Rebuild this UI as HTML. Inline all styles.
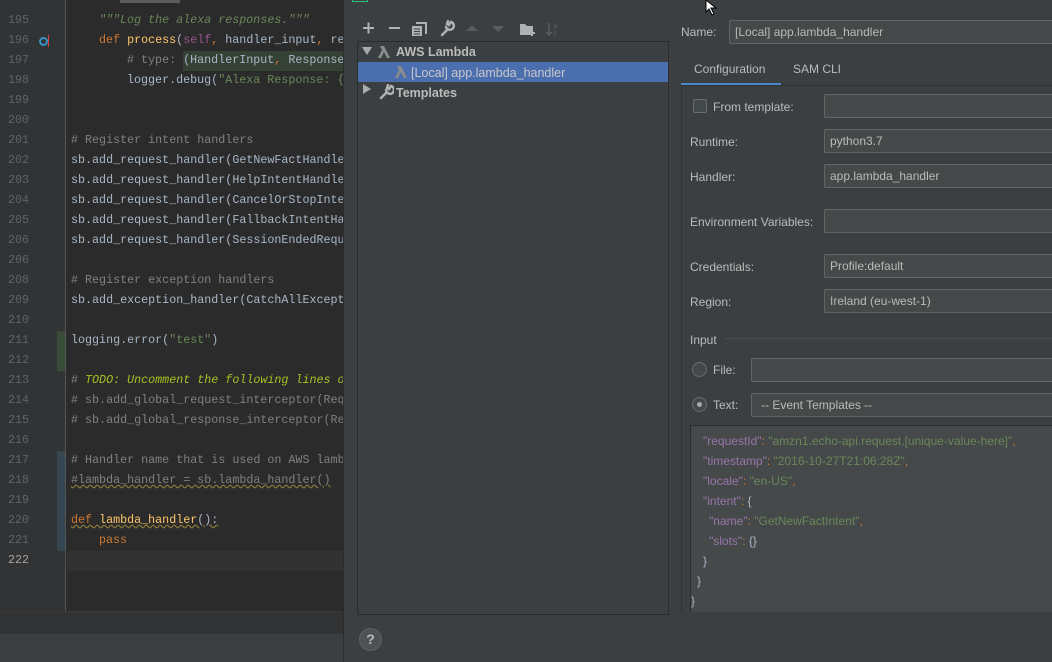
<!DOCTYPE html>
<html><head><meta charset="utf-8"><style>
*{margin:0;padding:0;box-sizing:border-box}
body{width:1052px;height:662px;overflow:hidden;background:#3c3f41;position:relative;font-family:"Liberation Sans",sans-serif;font-size:12px;color:#bbbbbb}
.abs{position:absolute}
#ed{left:0;top:0;width:344px;height:611px;background:#2b2b2b;overflow:hidden}
#gut{left:0;top:0;width:66px;height:611px;background:#313335;border-right:1px solid #555}
.ln{position:absolute;left:8px;width:24px;font:11.7px "Liberation Mono",monospace;color:#606366}
.cd{position:absolute;left:71px;font:11.7px "Liberation Mono",monospace;color:#a9b7c6;white-space:pre}
.cm{color:#808080}.kw{color:#cc7832}.st{color:#6a8759}.fn{color:#ffc66d}.sf{color:#94558d}
.fld{position:absolute;background:#45494a;border:1px solid #646464;border-radius:2px;padding-left:5px;line-height:22px;color:#bbbbbb}
.lbl{position:absolute}
.j{position:absolute;white-space:pre;font-size:12px}
.k{color:#9876aa}.v{color:#6a8759}.p{color:#cc7832}.b{color:#a9b7c6}
</style></head><body>
<div id="ed" class="abs">
<div id="gut" class="abs"></div>
<div class="abs" style="left:57px;top:331px;width:8px;height:40px;background:#384c38"></div>
<div class="abs" style="left:57px;top:451px;width:8px;height:100px;background:#374752"></div>
<div class="abs" style="left:67px;top:551px;width:277px;height:20px;background:#323232"></div>
<div class="abs" style="left:183px;top:51px;width:161px;height:20px;background:#344134"></div>
<div class="abs" style="left:120px;top:0;width:60px;height:3px;background:#5a5d5f"></div>
<div class="abs" style="left:39px;top:37px;width:9px;height:9px;border-radius:50%;border:2px solid #3592c4"></div>
<div class="abs" style="left:48px;top:35px;width:1px;height:12px;background:#d34242"></div>
</div>
<div class="ln" style="top:13px">195</div><div class="cd" style="top:13px;left:99px"><span class="st" style="font-style:italic">"""Log the alexa responses."""</span></div>
<div class="ln" style="top:33px">196</div><div class="cd" style="top:33px;left:99px"><span class="kw">def </span><span class="fn">process</span>(<span class="sf">self</span><span class="kw">, </span>handler_input<span class="kw">, </span>re</div>
<div class="ln" style="top:53px">197</div><div class="cd" style="top:53px;left:127px"><span class="cm"># type: </span>(HandlerInput<span class="kw">, </span>Response</div>
<div class="ln" style="top:73px">198</div><div class="cd" style="top:73px;left:127px">logger.debug(<span class="st">"Alexa Response: {</span></div>
<div class="ln" style="top:93px">199</div>
<div class="ln" style="top:113px">200</div>
<div class="ln" style="top:133px">201</div><div class="cd cm" style="top:133px"># Register intent handlers</div>
<div class="ln" style="top:153px">202</div><div class="cd" style="top:153px">sb.add_request_handler(GetNewFactHandle</div>
<div class="ln" style="top:173px">203</div><div class="cd" style="top:173px">sb.add_request_handler(HelpIntentHandle</div>
<div class="ln" style="top:193px">204</div><div class="cd" style="top:193px">sb.add_request_handler(CancelOrStopInte</div>
<div class="ln" style="top:213px">205</div><div class="cd" style="top:213px">sb.add_request_handler(FallbackIntentHa</div>
<div class="ln" style="top:233px">206</div><div class="cd" style="top:233px">sb.add_request_handler(SessionEndedRequ</div>
<div class="ln" style="top:253px">206</div>
<div class="ln" style="top:273px">208</div><div class="cd cm" style="top:273px"># Register exception handlers</div>
<div class="ln" style="top:293px">209</div><div class="cd" style="top:293px">sb.add_exception_handler(CatchAllExcept</div>
<div class="ln" style="top:313px">210</div>
<div class="ln" style="top:333px">211</div><div class="cd" style="top:333px">logging.error(<span class="st">"test"</span>)</div>
<div class="ln" style="top:353px">212</div>
<div class="ln" style="top:373px">213</div><div class="cd" style="top:373px"><span class="cm"># </span><span style="color:#a8c023;font-style:italic">TODO: Uncomment the following lines o</span></div>
<div class="ln" style="top:393px">214</div><div class="cd cm" style="top:393px"># sb.add_global_request_interceptor(Req</div>
<div class="ln" style="top:413px">215</div><div class="cd cm" style="top:413px"># sb.add_global_response_interceptor(Re</div>
<div class="ln" style="top:433px">216</div>
<div class="ln" style="top:453px">217</div><div class="cd cm" style="top:453px"># Handler name that is used on AWS lamb</div>
<div class="ln" style="top:473px">218</div><div class="cd cm" style="top:473px;text-decoration:underline wavy #8a7a3a">#lambda_handler = sb.lambda_handler()</div>
<div class="ln" style="top:493px">219</div>
<div class="ln" style="top:513px">220</div><div class="cd" style="top:513px;text-decoration:underline wavy #8a7a3a"><span class="kw">def </span><span class="fn">lambda_handler</span>():</div>
<div class="ln" style="top:533px">221</div><div class="cd kw" style="top:533px;left:99px">pass</div>
<div class="ln" style="top:553px;color:#a4a3a3">222</div>
<div class="abs" style="left:0;top:611px;width:344px;height:23px;background:#313335;border-top:1px solid #3a3a3a"></div>
<div class="abs" style="left:0;top:634px;width:344px;height:28px;background:#3c3f41"></div>

<!-- dialog -->
<div class="abs" style="left:343px;top:0;width:709px;height:662px;background:#3c3f41;border-left:1px solid #2b2b2b"></div>
<div class="abs" style="left:352px;top:0;width:16px;height:2px;border:1px solid #2fc07a;border-top:none"></div>
<svg class="abs" style="left:360px;top:18px" width="200" height="20">
 <g stroke="#afb1b3" stroke-width="2" fill="none">
  <path d="M3 10h11M8.5 4.5v11"/>
  <path d="M29 10h11"/>
 </g>
 <path d="M56 5h10v11" stroke="#afb1b3" stroke-width="2" fill="none"/>
 <rect x="52" y="8" width="10" height="10" fill="#afb1b3"/>
 <path d="M54 11h6M54 13.5h6M54 16h6" stroke="#3c3f41" stroke-width="1"/>
 <path d="M82 17l6-6M86 9a4 4 0 1 0 5-5l-2 3-2-1 1-3" stroke="#afb1b3" stroke-width="2.5" fill="none" stroke-linecap="round"/>
 <path d="M106 13l6-6 6 6z" fill="#5a5d5f"/>
 <path d="M132 8l6 6 6-6z" fill="#5a5d5f"/>
 <path d="M160 6h5l2 2h6v9h-13z" fill="#afb1b3"/>
 <path d="M172 12v6M169 15h6" stroke="#afb1b3" stroke-width="2"/>
 <path d="M189 5v12M186 14l3 3 3-3" stroke="#5a5d5f" stroke-width="1.5" fill="none"/>
 <text x="193" y="10" font-size="8" fill="#5a5d5f" font-family="Liberation Sans">a</text>
 <text x="193" y="18" font-size="8" fill="#5a5d5f" font-family="Liberation Sans">z</text>
</svg>
<div class="abs" style="left:357px;top:41px;width:312px;height:574px;border:1px solid #2b2b2b;background:#3c3f41"></div>
<div class="abs" style="left:358px;top:62px;width:310px;height:20px;background:#4b6eaf"></div>
<svg class="abs" style="left:360px;top:44px" width="20" height="60">
 <path d="M2 3h10l-5 8z" fill="#aaa"/>
 <path d="M3 40v10l8-5z" fill="#aaa"/>
</svg>
<svg class="abs" style="left:377px;top:44px" width="16" height="16"><path d="M3 2h4l6 12h-3l-3-6-3 6H1l4-8z" fill="#8c8c8c"/></svg>
<div class="abs" style="left:396px;top:45px;font-weight:bold;font-size:12.5px">AWS Lambda</div>
<svg class="abs" style="left:394px;top:64px" width="16" height="16"><path d="M3 2h4l6 12h-3l-3-6-3 6H1l4-8z" fill="#8c8c8c"/></svg>
<div class="abs" style="left:411px;top:66px;color:#c8c8c8;font-size:12.5px">[Local] app.lambda_handler</div>
<svg class="abs" style="left:378px;top:84px" width="16" height="16"><path d="M3 14l6-6M8 6a4 4 0 1 0 5-4l-2 3-2-1 1-3" stroke="#afb1b3" stroke-width="2.5" fill="none" stroke-linecap="round"/></svg>
<div class="abs" style="left:396px;top:86px;font-weight:bold;font-size:12.5px">Templates</div>

<div class="lbl" style="left:681px;top:25px">Name:</div>
<div class="fld" style="left:729px;top:20px;width:330px;height:24px">[Local] app.lambda_handler</div>
<div class="lbl" style="left:694px;top:62px">Configuration</div>
<div class="lbl" style="left:793px;top:62px">SAM CLI</div>
<div class="abs" style="left:681px;top:83px;width:100px;height:3px;background:#4a88c7"></div>
<div class="abs" style="left:681px;top:85px;width:371px;height:1px;background:#323232"></div>
<div class="abs" style="left:681px;top:86px;width:1px;height:526px;background:#2f3133"></div>
<div class="abs" style="left:693px;top:99px;width:14px;height:14px;border:1px solid #6b6b6b;border-radius:2px;background:#43494a"></div>
<div class="lbl" style="left:713px;top:100px">From template:</div>
<div class="fld" style="left:824px;top:94px;width:240px;height:24px"></div>
<div class="lbl" style="left:690px;top:135px">Runtime:</div>
<div class="fld" style="left:824px;top:129px;width:240px;height:24px">python3.7</div>
<div class="lbl" style="left:690px;top:170px">Handler:</div>
<div class="fld" style="left:824px;top:164px;width:240px;height:24px">app.lambda_handler</div>
<div class="lbl" style="left:690px;top:215px">Environment Variables:</div>
<div class="fld" style="left:824px;top:209px;width:240px;height:24px"></div>
<div class="lbl" style="left:690px;top:260px">Credentials:</div>
<div class="fld" style="left:824px;top:254px;width:240px;height:24px">Profile:default</div>
<div class="lbl" style="left:690px;top:295px">Region:</div>
<div class="fld" style="left:824px;top:289px;width:240px;height:24px">Ireland (eu-west-1)</div>
<div class="lbl" style="left:690px;top:333px">Input</div>
<div class="abs" style="left:725px;top:338px;width:327px;height:1px;background:#4a4d4f"></div>
<div class="abs" style="left:692px;top:362px;width:15px;height:15px;border:1px solid #6b6b6b;border-radius:50%;background:#43494a"></div>
<div class="lbl" style="left:713px;top:363px">File:</div>
<div class="fld" style="left:751px;top:358px;width:310px;height:24px"></div>
<div class="abs" style="left:692px;top:397px;width:15px;height:15px;border:1px solid #6b6b6b;border-radius:50%;background:#43494a"></div>
<div class="abs" style="left:697px;top:402px;width:5px;height:5px;border-radius:50%;background:#aaa"></div>
<div class="lbl" style="left:713px;top:398px">Text:</div>
<div class="fld" style="left:751px;top:393px;width:310px;height:24px;padding-left:9px">-- Event Templates --</div>
<div class="abs" style="left:690px;top:425px;width:362px;height:187px;background:#45494a;border-left:1px solid #2b2b2b;border-top:1px solid #2b2b2b"></div>
<div class="j" style="left:703px;top:434px"><span class="k">"requestId"</span><span class="p">: </span><span class="v">"amzn1.echo-api.request.[unique-value-here]"</span><span class="p">,</span></div>
<div class="j" style="left:703px;top:454px"><span class="k">"timestamp"</span><span class="p">: </span><span class="v">"2016-10-27T21:06:28Z"</span><span class="p">,</span></div>
<div class="j" style="left:703px;top:474px"><span class="k">"locale"</span><span class="p">: </span><span class="v">"en-US"</span><span class="p">,</span></div>
<div class="j" style="left:703px;top:494px"><span class="k">"intent"</span><span class="p">: </span><span class="b">{</span></div>
<div class="j" style="left:709px;top:514px"><span class="k">"name"</span><span class="p">: </span><span class="v">"GetNewFactIntent"</span><span class="p">,</span></div>
<div class="j" style="left:709px;top:534px"><span class="k">"slots"</span><span class="p">: </span><span class="b">{}</span></div>
<div class="j b" style="left:703px;top:554px">}</div>
<div class="j b" style="left:697px;top:574px">}</div>
<div class="j b" style="left:691px;top:594px">}</div>
<div class="abs" style="left:359px;top:628px;width:23px;height:23px;border-radius:50%;background:#4f5254;border:1px solid #5e6163;color:#bbb;font-weight:bold;font-size:14px;text-align:center;line-height:21px">?</div>
<svg class="abs" style="left:705px;top:0" width="14" height="16"><path d="M1 0 L1 12 L4 9 L7 15 L9 14 L6 8 L11 8 Z" fill="#fff" stroke="#000" stroke-width="1"/></svg>
</body></html>
